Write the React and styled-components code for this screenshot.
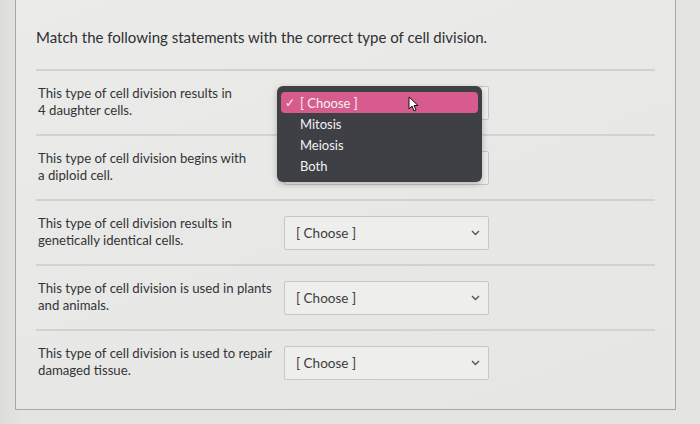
import React from 'react'
import styled, { createGlobalStyle } from 'styled-components'

const GlobalStyle = createGlobalStyle`
    html, body {
        margin: 0;
        padding: 0;
        background: #dededc;
        font-family: Lato, "Open Sans", sans-serif;
    }
    #root {
        height: 424px;
        overflow: hidden;
    }
`

const Page = styled.div`
    display: flex;
    padding-left: 15px;
    height: 424px;
    box-sizing: border-box;
    background: linear-gradient(90deg, #dcdcda 0%, #e4e4e2 3%);
`

const Panel = styled.div`
    width: 661px;
    height: 410px;
    box-sizing: border-box;
    background: linear-gradient(160deg, #ebebe9 0%, #e8e8e6 50%, #e6e6e4 100%);
    border-left: 1px solid #a7a7a5;
    border-right: 1px solid #a7a7a5;
    border-bottom: 1px solid #a7a7a5;
    padding: 0 20px 0 20px;
    display: flex;
    flex-direction: column;
`

const Title = styled.h2`
    margin: 0;
    padding: 28px 0 23px 0;
    font-size: 15px;
    font-weight: 400;
    line-height: 18px;
    color: #2f3032;
    border-bottom: 2px solid #d2d2d0;
`

const Row = styled.div`
    display: grid;
    grid-template-columns: 246px 205px;
    height: 65px;
    box-sizing: border-box;
    padding: 15px 0 0 2px;
    border-bottom: ${props => (props.last ? 'none' : '2px solid #d2d2d0')};
`

const Statement = styled.p`
    margin: -1px 0 0 0;
    font-size: 13.2px;
    line-height: 17px;
    color: #333436;
`

const SelectWrap = styled.div`
    position: relative;
    height: 34px;
`

const SelectBox = styled.div`
    height: 34px;
    box-sizing: border-box;
    border: 1px solid #c7c7c5;
    border-radius: 2px;
    background: #eeeeec;
    display: flex;
    align-items: center;
    justify-content: space-between;
    padding: 0 8px 0 11px;
    font-size: 13.5px;
    color: #3c3d40;
`

const Chevron = () => (
    <svg width="9" height="6" viewBox="0 0 9 6">
        <path d="M1 1 L4.5 4.5 L8 1" fill="none" stroke="#555" strokeWidth="1.4" />
    </svg>
)

const Menu = styled.div`
    position: absolute;
    left: -7px;
    top: 0;
    width: 205px;
    height: 96px;
    box-sizing: border-box;
    background: #3e4045;
    border-radius: 6px;
    padding: 6px 4px;
    box-shadow: 0 2px 6px rgba(0, 0, 0, 0.25);
    z-index: 2;
`

const MenuItem = styled.div`
    height: 21px;
    display: flex;
    align-items: center;
    padding-left: ${props => (props.selected ? '4px' : '19px')};
    border-radius: 4px;
    font-size: 13px;
    color: #f2f2f2;
    background: ${props => (props.selected ? '#d85b8d' : 'transparent')};
`

const Check = styled.span`
    width: 15px;
    font-size: 12px;
`

const Cursor = styled.svg`
    position: absolute;
    left: 131px;
    top: 10px;
`

const rows = [
    ['This type of cell division results in', '4 daughter cells.'],
    ['This type of cell division begins with', 'a diploid cell.'],
    ['This type of cell division results in', 'genetically identical cells.'],
    ['This type of cell division is used in plants', 'and animals.'],
    ['This type of cell division is used to repair', 'damaged tissue.'],
]

const Dropdown = () => (
    <Menu>
        <MenuItem selected><Check>✓</Check>[ Choose ]</MenuItem>
        <MenuItem>Mitosis</MenuItem>
        <MenuItem>Meiosis</MenuItem>
        <MenuItem>Both</MenuItem>
        <Cursor width="11" height="16" viewBox="0 0 11 16">
            <path d="M1 1 L1 13 L4 10 L6 15 L8 14 L6 9.5 L10 9.5 Z" fill="#fff" stroke="#111" strokeWidth="1" strokeLinejoin="round" />
        </Cursor>
    </Menu>
)

const App = () => (
    <Page>
        <GlobalStyle />
        <Panel>
            <Title>Match the following statements with the correct type of cell division.</Title>
            {rows.map((r, i) => (
                <Row key={i} last={i === rows.length - 1}>
                    <Statement>{r[0]}<br />{r[1]}</Statement>
                    <SelectWrap>
                        <SelectBox>
                            <span>[ Choose ]</span>
                            <Chevron />
                        </SelectBox>
                        {i === 0 && <Dropdown />}
                    </SelectWrap>
                </Row>
            ))}
        </Panel>
    </Page>
)

export default App
